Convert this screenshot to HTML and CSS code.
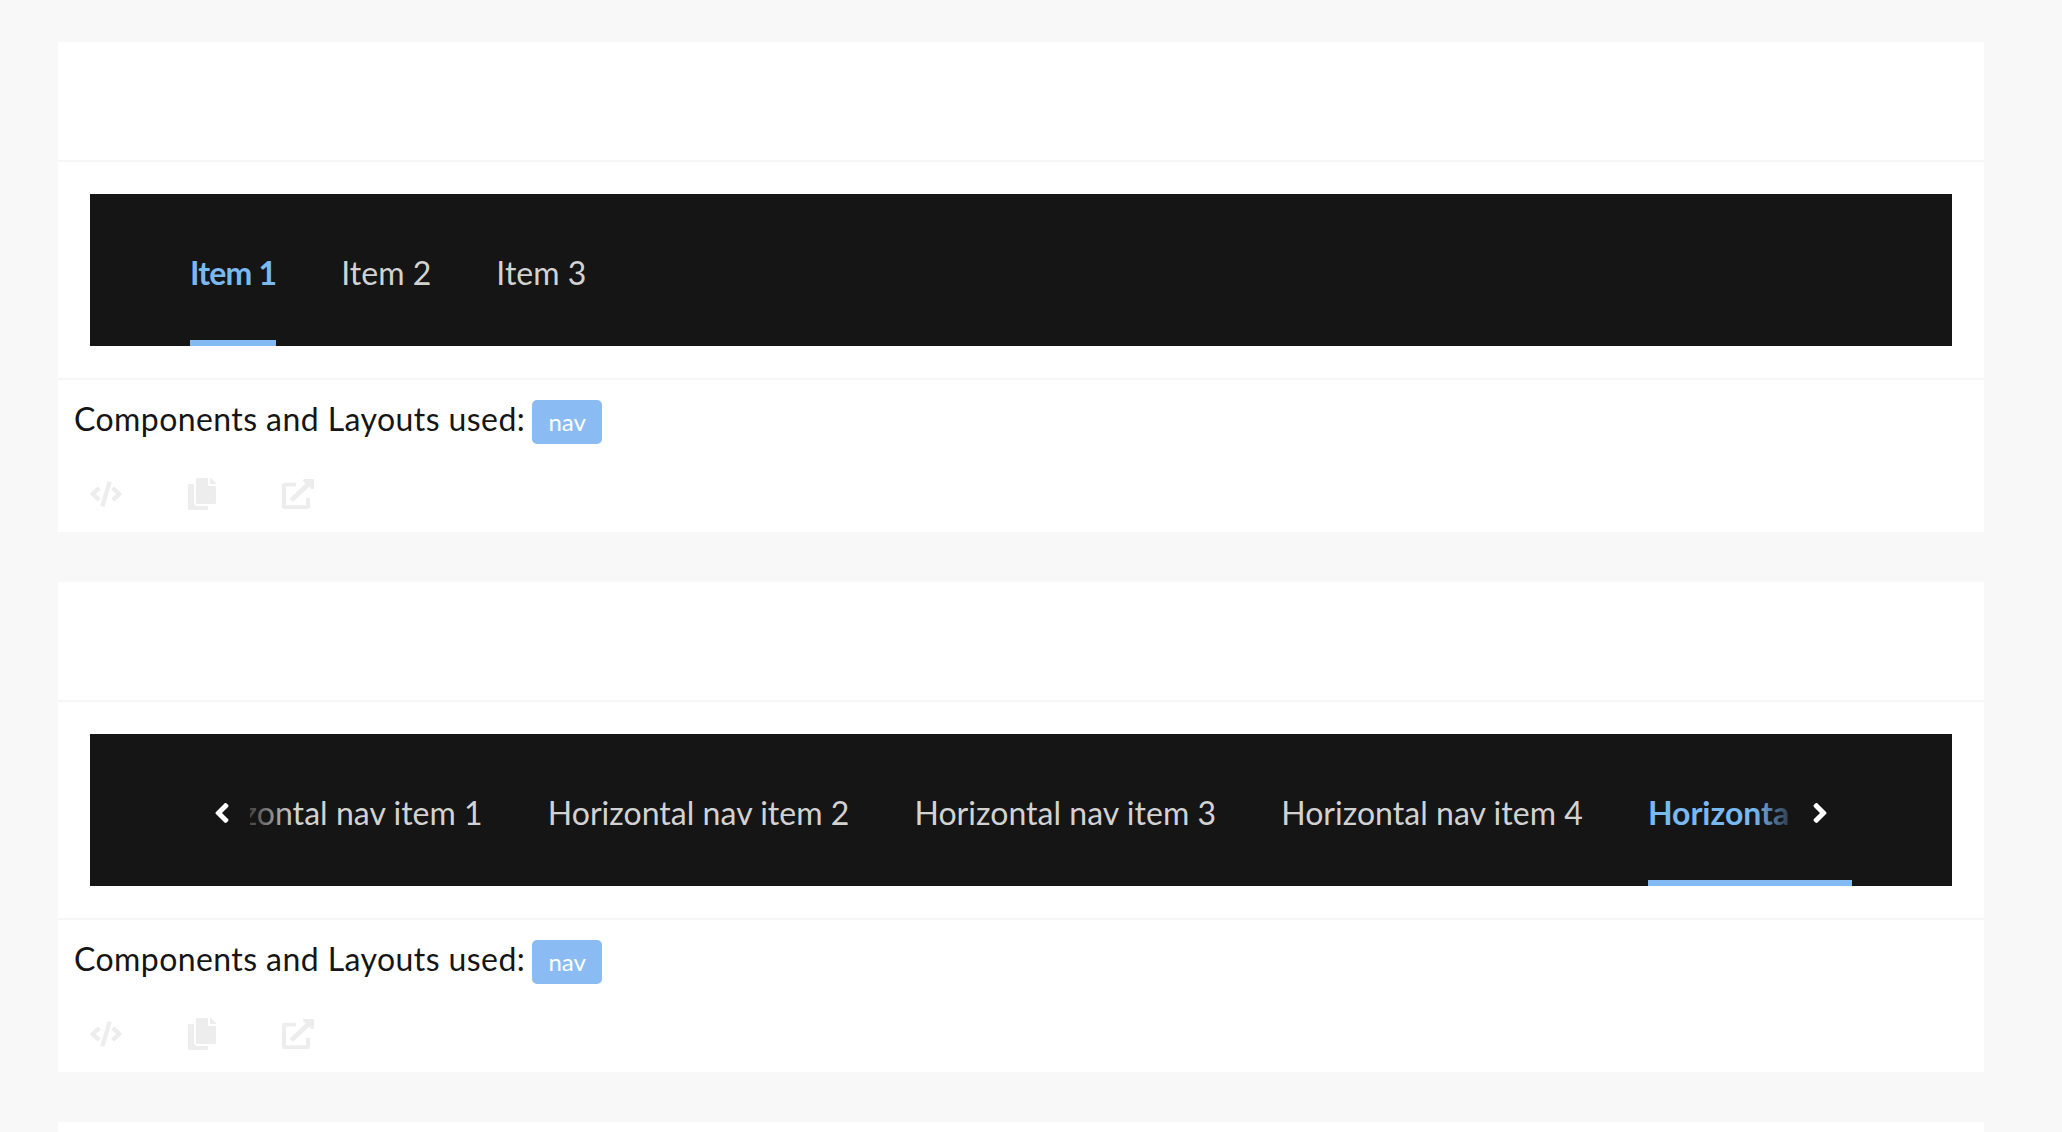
FILE: index.html
```html
<!DOCTYPE html>
<html lang="en">
<head>
    <meta charset="UTF-8">
    <meta name="viewport" content="width=device-width, initial-scale=1.0">
    <title>Nav demos</title>
    <link rel="stylesheet" href="styles.css">
</head>
<body>
    <section class="card">
        <div class="card-header"></div>
        <div class="card-body">
            <nav class="nav-bar">
                <ul class="nav-list">
                    <li class="nav-item active">Item 1</li>
                    <li class="nav-item">Item 2</li>
                    <li class="nav-item">Item 3</li>
                </ul>
            </nav>
        </div>
        <div class="card-footer">
            <p class="used">Components and Layouts used: <span class="badge">nav</span></p>
            <div class="actions">
                <svg class="icon icon-code" viewBox="0 0 640 512"><path d="M278.9 511.5l-61-17.7c-6.4-1.8-10-8.5-8.2-14.9L346.2 8.7c1.8-6.4 8.5-10 14.9-8.2l61 17.7c6.4 1.8 10 8.5 8.2 14.9L293.8 503.3c-1.9 6.4-8.5 10.1-14.9 8.2zm-114-112.2l43.5-46.4c4.6-4.9 4.3-12.7-.8-17.2L117 256l90.6-79.7c5.1-4.5 5.5-12.3.8-17.2l-43.5-46.4c-4.5-4.8-12.1-5.1-17-.5L3.8 247.2c-5.1 4.7-5.1 12.8 0 17.5l144.1 135.1c4.9 4.6 12.5 4.4 17-.5zm327.2.6l144.1-135.1c5.1-4.7 5.1-12.8 0-17.5L492.1 112.1c-4.8-4.5-12.4-4.3-17 .5L431.6 159c-4.6 4.9-4.3 12.7.8 17.2L523 256l-90.6 79.7c-5.1 4.5-5.5 12.3-.8 17.2l43.5 46.4c4.5 4.9 12.1 5.1 17 .6z"/></svg>
                <svg class="icon icon-copy" viewBox="0 0 448 512"><path d="M320 448v40c0 13.255-10.745 24-24 24H24c-13.255 0-24-10.745-24-24V120c0-13.255 10.745-24 24-24h72v296c0 30.879 25.121 56 56 56h168zm0-344V0H152c-13.255 0-24 10.745-24 24v368c0 13.255 10.745 24 24 24h272c13.255 0 24-10.745 24-24V128H344c-13.2 0-24-10.8-24-24zm120.971-31.029L375.029 7.029A24 24 0 0 0 358.059 0H352v96h96v-6.059a24 24 0 0 0-7.029-16.97z"/></svg>
                <svg class="icon icon-open" viewBox="0 0 512 512" preserveAspectRatio="none"><path d="M432 320h-32a16 16 0 0 0-16 16v112H64V128h144a16 16 0 0 0 16-16V80a16 16 0 0 0-16-16H48a48 48 0 0 0-48 48v352a48 48 0 0 0 48 48h352a48 48 0 0 0 48-48V336a16 16 0 0 0-16-16zM488 0H360c-21.37 0-32.05 25.91-17 41l35.73 35.73L135 320.37a24 24 0 0 0 0 34L157.67 377a24 24 0 0 0 34 0l243.61-243.68L471 169c15 15 41 4.5 41-17V24a24 24 0 0 0-24-24z"/></svg>
            </div>
        </div>
    </section>

    <section class="card">
        <div class="card-header"></div>
        <div class="card-body">
            <nav class="nav-bar">
                <div class="nav-scroller">
                    <button class="scroll-btn scroll-left">
                        <svg class="chevron" viewBox="0 0 256 512"><path d="M31.7 239l136-136c9.4-9.4 24.6-9.4 33.9 0l22.6 22.6c9.4 9.4 9.4 24.6 0 33.9L127.9 256l96.4 96.4c9.4 9.4 9.4 24.6 0 33.9L201.7 409c-9.4 9.4-24.6 9.4-33.9 0l-136-136c-9.5-9.4-9.5-24.6-.1-34z"/></svg>
                    </button>
                    <ul class="nav-list scrolled">
                        <li class="nav-item">Horizontal nav item 1</li>
                        <li class="nav-item">Horizontal nav item 2</li>
                        <li class="nav-item">Horizontal nav item 3</li>
                        <li class="nav-item">Horizontal nav item 4</li>
                        <li class="nav-item active">Horizontal nav item 5</li>
                    </ul>
                    <button class="scroll-btn scroll-right">
                        <svg class="chevron" viewBox="0 0 256 512"><path d="M224.3 273l-136 136c-9.4 9.4-24.6 9.4-33.9 0l-22.6-22.6c-9.4-9.4-9.4-24.6 0-33.9l96.4-96.4-96.4-96.4c-9.4-9.4-9.4-24.6 0-33.9L54.3 103c9.4-9.4 24.6-9.4 33.9 0l136 136c9.5 9.4 9.5 24.6.1 34z"/></svg>
                    </button>
                </div>
            </nav>
        </div>
        <div class="card-footer">
            <p class="used">Components and Layouts used: <span class="badge">nav</span></p>
            <div class="actions">
                <svg class="icon icon-code" viewBox="0 0 640 512"><path d="M278.9 511.5l-61-17.7c-6.4-1.8-10-8.5-8.2-14.9L346.2 8.7c1.8-6.4 8.5-10 14.9-8.2l61 17.7c6.4 1.8 10 8.5 8.2 14.9L293.8 503.3c-1.9 6.4-8.5 10.1-14.9 8.2zm-114-112.2l43.5-46.4c4.6-4.9 4.3-12.7-.8-17.2L117 256l90.6-79.7c5.1-4.5 5.5-12.3.8-17.2l-43.5-46.4c-4.5-4.8-12.1-5.1-17-.5L3.8 247.2c-5.1 4.7-5.1 12.8 0 17.5l144.1 135.1c4.9 4.6 12.5 4.4 17-.5zm327.2.6l144.1-135.1c5.1-4.7 5.1-12.8 0-17.5L492.1 112.1c-4.8-4.5-12.4-4.3-17 .5L431.6 159c-4.6 4.9-4.3 12.7.8 17.2L523 256l-90.6 79.7c-5.1 4.5-5.5 12.3-.8 17.2l43.5 46.4c4.5 4.9 12.1 5.1 17 .6z"/></svg>
                <svg class="icon icon-copy" viewBox="0 0 448 512"><path d="M320 448v40c0 13.255-10.745 24-24 24H24c-13.255 0-24-10.745-24-24V120c0-13.255 10.745-24 24-24h72v296c0 30.879 25.121 56 56 56h168zm0-344V0H152c-13.255 0-24 10.745-24 24v368c0 13.255 10.745 24 24 24h272c13.255 0 24-10.745 24-24V128H344c-13.2 0-24-10.8-24-24zm120.971-31.029L375.029 7.029A24 24 0 0 0 358.059 0H352v96h96v-6.059a24 24 0 0 0-7.029-16.97z"/></svg>
                <svg class="icon icon-open" viewBox="0 0 512 512" preserveAspectRatio="none"><path d="M432 320h-32a16 16 0 0 0-16 16v112H64V128h144a16 16 0 0 0 16-16V80a16 16 0 0 0-16-16H48a48 48 0 0 0-48 48v352a48 48 0 0 0 48 48h352a48 48 0 0 0 48-48V336a16 16 0 0 0-16-16zM488 0H360c-21.37 0-32.05 25.91-17 41l35.73 35.73L135 320.37a24 24 0 0 0 0 34L157.67 377a24 24 0 0 0 34 0l243.61-243.68L471 169c15 15 41 4.5 41-17V24a24 24 0 0 0-24-24z"/></svg>
            </div>
        </div>
    </section>

    <section class="card card-cut"></section>
</body>
</html>
```

FILE: styles.css
```css
* {
    box-sizing: border-box;
}

html, body {
    height: 1132px;
    overflow: hidden;
}

body {
    margin: 0;
    padding: 42px 78px 0 58px;
    background-color: #f8f8f8;
    font-family: "Lato", Arial, sans-serif;
}

.card {
    background: #fff;
    height: 490px;
    margin-bottom: 50px;
}

.card-cut {
    height: 10px;
    margin-bottom: 0;
}

.card-header {
    height: 120px;
    border-bottom: 2px solid #f6f6f6;
}

.card-body {
    height: 218px;
    padding: 32px;
    border-bottom: 2px solid #f6f6f6;
}

.card-footer {
    padding: 20px 0 0 16px;
}

.nav-bar {
    height: 152px;
    padding: 0 100px;
    background-color: #151515;
}

.nav-list {
    display: flex;
    gap: 65px;
    height: 152px;
    margin: 0;
    padding: 0;
    list-style: none;
}

.nav-item {
    flex-shrink: 0;
    height: 152px;
    padding-top: 58px;
    font-size: 32px;
    line-height: 42px;
    letter-spacing: 0.04px;
    color: #d2d2d2;
    white-space: nowrap;
}

.nav-item.active {
    color: #7ab8f2;
    font-weight: 700;
    letter-spacing: -0.8px;
    border-bottom: 6px solid #84baf3;
}

/* scroller keeps the clipped tabs and the fades in one box */
.nav-scroller {
    position: relative;
    height: 152px;
    overflow: hidden;
}

.nav-list.scrolled {
    margin-left: -9px;
}

.nav-list.scrolled .active {
    letter-spacing: 0;
}

.scroll-btn {
    position: absolute;
    top: 0;
    height: 146px;
    padding: 12px 0 0;
    border: 0;
    display: flex;
    align-items: center;
}

.scroll-left {
    left: 0;
    width: 105px;
    padding-left: 24px;
    background: linear-gradient(to right, #151515 57%, rgba(21, 21, 21, 0.75) 57%, rgba(21, 21, 21, 0));
}

.scroll-right {
    right: 0;
    width: 98px;
    padding-left: 58px;
    background: linear-gradient(to left, #151515 64%, rgba(21, 21, 21, 0.75) 64%, rgba(21, 21, 21, 0));
}

.chevron {
    display: block;
    width: 16px;
    height: 32px;
    fill: #fff;
}

.used {
    display: flex;
    align-items: flex-start;
    gap: 7px;
    height: 44px;
    margin: 0;
    font-size: 32px;
    line-height: 38px;
    letter-spacing: 0.42px;
    color: #151515;
}

.badge {
    display: flex;
    align-items: center;
    justify-content: center;
    width: 70px;
    height: 44px;
    border-radius: 5px;
    background-color: #8abcf3;
    color: #fff;
    font-size: 24px;
    line-height: 44px;
    letter-spacing: 0;
}

.actions {
    display: flex;
    align-items: center;
    margin-top: 34px;
    padding-left: 16px;
}

.icon {
    display: block;
    fill: #ededed;
}

.icon-code {
    width: 32px;
    height: 26px;
}

.icon-copy {
    width: 28px;
    height: 32px;
    margin-left: 66px;
}

.icon-open {
    width: 32px;
    height: 30px;
    margin-left: 66px;
}
```
